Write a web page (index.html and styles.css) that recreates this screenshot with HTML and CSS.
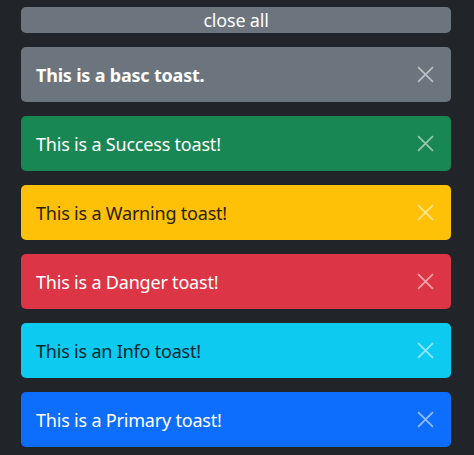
FILE: index.html
```html
<!DOCTYPE html>
<html lang="en">

<head>
  <meta charset="UTF-8" />
  <meta name="viewport" content="width=device-width, initial-scale=1.0" />
  <title>Toasts</title>
  <link rel="stylesheet" href="styles.css">
</head>

<body>
  <div class="container">
    <button class="close-all">close all</button>

    <div class="toast toast-basic">
      <span class="toast-text">This is a basc toast.</span>
      <button class="toast-close" aria-label="Close">
        <svg viewBox="0 0 16 16"><path d="M1 1L15 15M15 1L1 15" /></svg>
      </button>
    </div>

    <div class="toast toast-success">
      <span class="toast-text">This is a Success toast!</span>
      <button class="toast-close" aria-label="Close">
        <svg viewBox="0 0 16 16"><path d="M1 1L15 15M15 1L1 15" /></svg>
      </button>
    </div>

    <div class="toast toast-warning">
      <span class="toast-text">This is a Warning toast!</span>
      <button class="toast-close" aria-label="Close">
        <svg viewBox="0 0 16 16"><path d="M1 1L15 15M15 1L1 15" /></svg>
      </button>
    </div>

    <div class="toast toast-danger">
      <span class="toast-text">This is a Danger toast!</span>
      <button class="toast-close" aria-label="Close">
        <svg viewBox="0 0 16 16"><path d="M1 1L15 15M15 1L1 15" /></svg>
      </button>
    </div>

    <div class="toast toast-info">
      <span class="toast-text">This is an Info toast!</span>
      <button class="toast-close" aria-label="Close">
        <svg viewBox="0 0 16 16"><path d="M1 1L15 15M15 1L1 15" /></svg>
      </button>
    </div>

    <div class="toast toast-primary">
      <span class="toast-text">This is a Primary toast!</span>
      <button class="toast-close" aria-label="Close">
        <svg viewBox="0 0 16 16"><path d="M1 1L15 15M15 1L1 15" /></svg>
      </button>
    </div>
  </div>
</body>

</html>
```

FILE: styles.css
```css
body {
  margin: 0;
  background-color: #212529;
  font-family: "Noto Sans", "Open Sans", sans-serif;
}

.container {
  width: 430px;
  padding: 7px 0 0 21px;
  display: flex;
  flex-direction: column;
  gap: 14px;
}

.close-all {
  height: 26px;
  border: none;
  border-radius: 5px;
  background-color: #6c757d;
  color: #fff;
  font-family: inherit;
  font-size: 18px;
  line-height: 26px;
  letter-spacing: -0.2px;
  padding: 0;
  cursor: pointer;
}

.toast {
  height: 55px;
  border-radius: 5px;
  display: flex;
  align-items: center;
  justify-content: space-between;
  padding: 0 17px 0 15px;
  box-sizing: border-box;
  color: #fff;
}

.toast-text {
  font-size: 18px;
  letter-spacing: -0.2px;
}

.toast-basic .toast-text {
  font-weight: bold;
}

.toast-close {
  width: 17px;
  height: 17px;
  padding: 0;
  border: none;
  background: none;
  cursor: pointer;
}

.toast-close svg {
  display: block;
  width: 17px;
  height: 17px;
  fill: none;
  stroke: rgba(255, 255, 255, 0.55);
  stroke-width: 1.6;
}

.toast-basic {
  background-color: #6c757d;
}

.toast-success {
  background-color: #198754;
}

.toast-warning {
  background-color: #ffc107;
  color: #2b2106;
}

.toast-danger {
  background-color: #dc3545;
}

.toast-info {
  background-color: #0dcaf0;
  color: #06272e;
}

.toast-primary {
  background-color: #0d6efd;
}
```
